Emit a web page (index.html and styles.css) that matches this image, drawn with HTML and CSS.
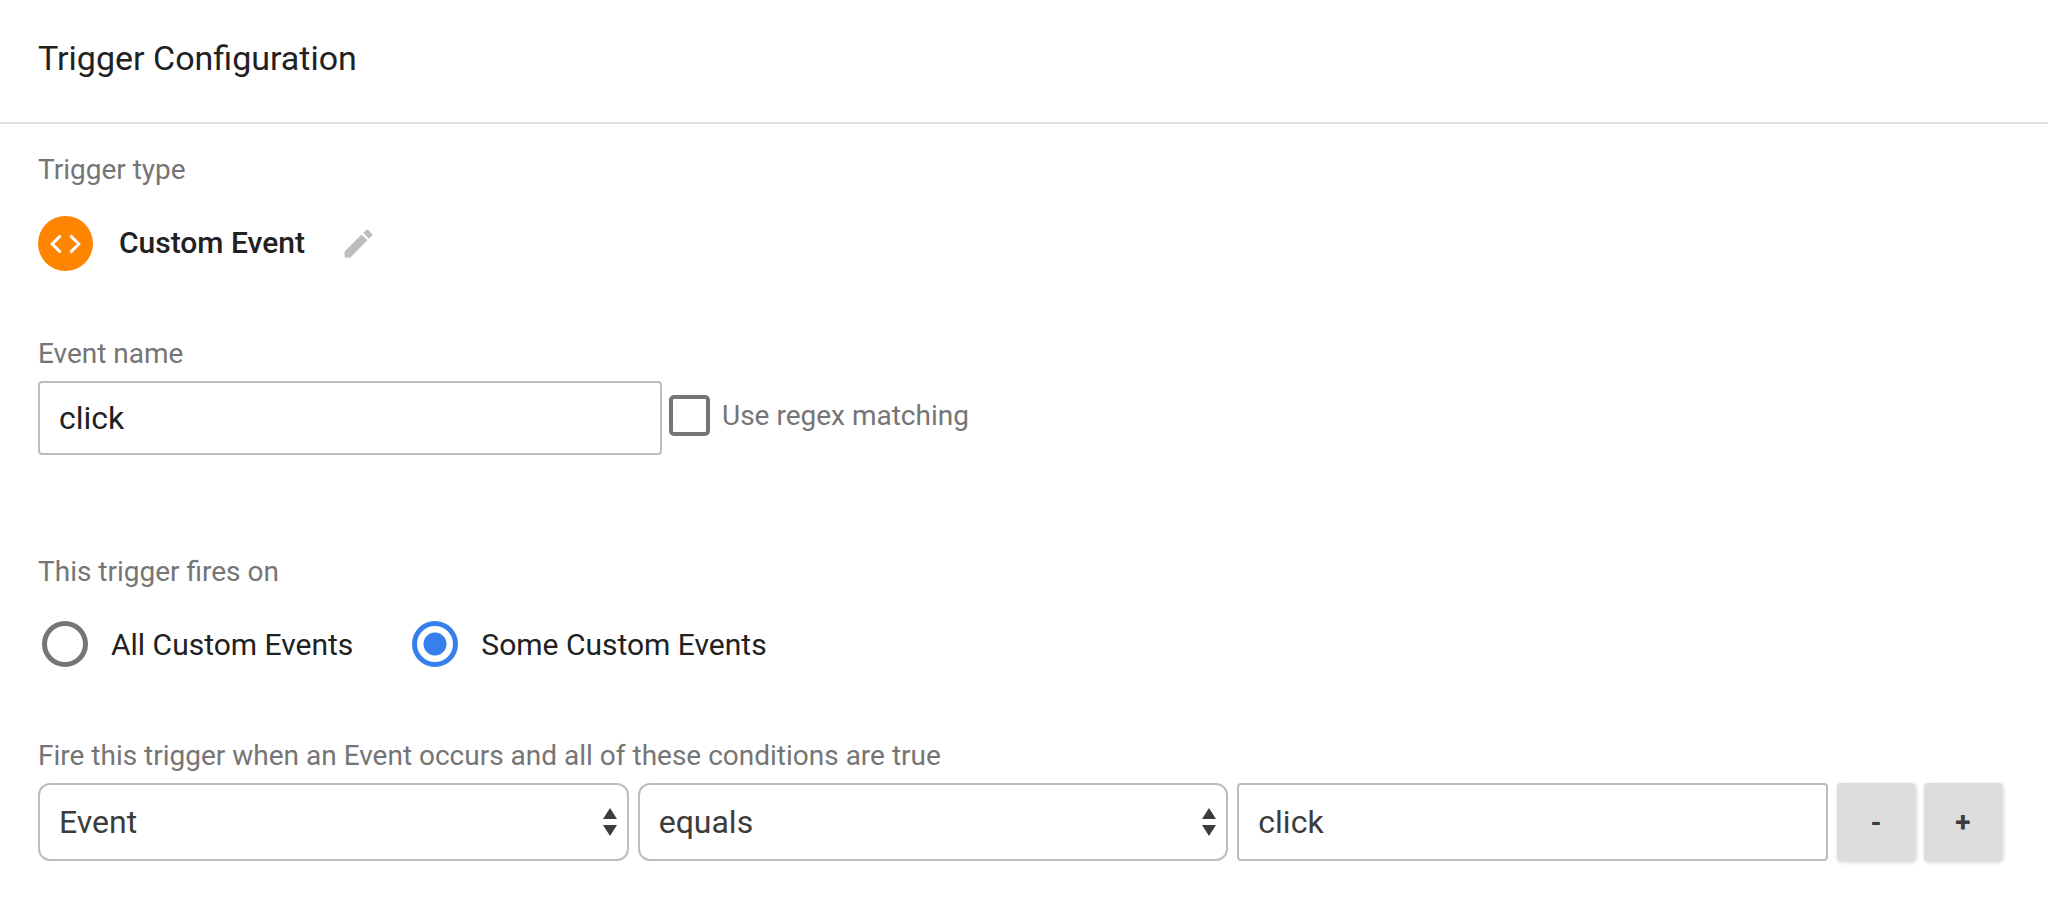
FILE: index.html
```html
<!DOCTYPE html>
<html lang="en">

<head>
  <meta charset="utf-8">
  <title>Trigger Configuration</title>
  <link rel="stylesheet" href="styles.css">
</head>

<body>
  <header class="header">
    <h1>Trigger Configuration</h1>
  </header>
  <main class="content">
    <section class="trigger-type">
      <h2 class="label">Trigger type</h2>
      <div class="type-row">
        <svg class="type-icon" viewBox="0 0 56 56" aria-hidden="true">
          <circle cx="28" cy="28" r="28" fill="#ff8500" />
          <path d="M23 20l-8.500 8.500 8.500 8.500M33 20l8.500 8.500-8.500 8.500" fill="none" stroke="#fff" stroke-width="3" />
        </svg>
        <span class="type-name">Custom Event</span>
        <button type="button" class="edit" aria-label="Edit">
          <svg viewBox="0 0 24 24" width="37" height="37">
            <path fill="#bdbdbd" d="M3 17.250V21h3.750L17.810 9.940l-3.750-3.750L3 17.250zM20.710 7.040a1 1 0 0 0 0-1.410l-2.340-2.340a1 1 0 0 0-1.410 0l-1.830 1.830 3.750 3.750 1.830-1.830z" />
          </svg>
        </button>
      </div>
    </section>

    <section class="event-name">
      <label class="label" for="event-name">Event name</label>
      <div class="name-row">
        <input type="text" class="text-input" id="event-name" value="click">
        <label class="check">
          <input type="checkbox" class="checkbox">
          Use regex matching
        </label>
      </div>
    </section>

    <section class="fires-on">
      <h2 class="label">This trigger fires on</h2>
      <div class="radio-row">
        <label class="radio-label">
          <input type="radio" class="radio" name="fires">
          All Custom Events
        </label>
        <label class="radio-label">
          <input type="radio" class="radio" name="fires" checked>
          Some Custom Events
        </label>
      </div>
    </section>

    <section class="conditions">
      <h2 class="label">Fire this trigger when an Event occurs and all of these conditions are true</h2>
      <div class="condition-row">
        <div class="select">
          <select aria-label="Variable">
            <option>Event</option>
          </select>
          <svg class="arrows" viewBox="0 0 14 28" aria-hidden="true">
            <path d="M0 11L7 0l7 11zM0 17h14L7 28z" fill="#3c3c3c" />
          </svg>
        </div>
        <div class="select">
          <select aria-label="Operator">
            <option>equals</option>
          </select>
          <svg class="arrows" viewBox="0 0 14 28" aria-hidden="true">
            <path d="M0 11L7 0l7 11zM0 17h14L7 28z" fill="#3c3c3c" />
          </svg>
        </div>
        <input type="text" class="text-input" aria-label="Value" value="click">
        <button type="button" class="btn">-</button>
        <button type="button" class="btn">+</button>
      </div>
    </section>
  </main>
</body>

</html>
```

FILE: styles.css
```css
* {
    box-sizing: border-box;
}

body {
    margin: 0;
    background-color: #fff;
    color: #212121;
    font-family: Roboto, Arial, sans-serif;
    font-size: 30px;
}

input,
select,
button {
    margin: 0;
    font-family: inherit;
}

.header {
    padding: 38px 38px 44px;
    border-bottom: 2px solid #e0e0e0;
}

h1 {
    margin: 0;
    font-size: 34px;
    font-weight: 400;
    line-height: 40px;
}

.content {
    padding: 30px 46px 48px 38px;
}

.label {
    display: block;
    margin: 0 0 11px;
    color: #757575;
    font-size: 28px;
    font-weight: 400;
    line-height: 32px;
}

/* trigger type */
.trigger-type {
    margin-bottom: 67px;
}

.trigger-type .label {
    margin-bottom: 30px;
}

.type-row {
    display: flex;
    align-items: center;
}

.type-icon {
    width: 55px;
    height: 55px;
}

.type-name {
    margin: 0 35px 0 26px;
    padding-bottom: 2px;
    font-weight: 500;
}

.edit {
    display: flex;
    padding: 0;
    border: 0;
    background: none;
}

/* event name */
.event-name {
    margin-bottom: 101px;
}

.name-row {
    display: flex;
    align-items: center;
    gap: 7px;
}

.text-input {
    height: 74px;
    padding: 0 19px;
    border: 2px solid #bdbdbd;
    border-radius: 4px;
    color: #212121;
    font-size: 32px;
}

.name-row .text-input {
    width: 624px;
}

.check {
    display: flex;
    align-items: center;
    gap: 12px;
    padding-bottom: 6px;
    color: #757575;
    font-size: 28px;
}

.checkbox {
    appearance: none;
    width: 41px;
    height: 41px;
    border: 4px solid #757575;
    border-radius: 5px;
}

/* fires on */
.fires-on {
    margin-bottom: 73px;
}

.fires-on .label {
    margin-bottom: 33px;
}

.radio-row {
    display: flex;
    gap: 59px;
    padding-left: 4px;
}

.radio-label {
    display: flex;
    align-items: center;
    gap: 23px;
}

.radio {
    appearance: none;
    width: 46px;
    height: 46px;
    border: 5px solid #757575;
    border-radius: 50%;
}

.radio:checked {
    border-color: #377fea;
    background: radial-gradient(circle, #377fea 11px, #fff 12px);
}

/* conditions */
.condition-row {
    display: grid;
    grid-template-columns: 1fr 1fr 1fr 78px 78px;
    gap: 9px;
}

.condition-row .text-input,
.select select {
    width: 100%;
    height: 78px;
    color: #3c3c3c;
}

.select {
    position: relative;
}

.select select {
    appearance: none;
    padding: 0 40px 0 19px;
    border: 2px solid #bdbdbd;
    border-radius: 12px;
    background-color: #fff;
    font-size: 32px;
}

.arrows {
    position: absolute;
    top: 25px;
    right: 12px;
    width: 14px;
    height: 28px;
    pointer-events: none;
}

.btn {
    padding: 0;
    border: 0;
    border-radius: 4px;
    background-color: #ddd;
    box-shadow: 1px 1px 4px rgba(0, 0, 0, 0.2);
    color: #3c3c3c;
    font-size: 28px;
    font-weight: 700;
}
```
